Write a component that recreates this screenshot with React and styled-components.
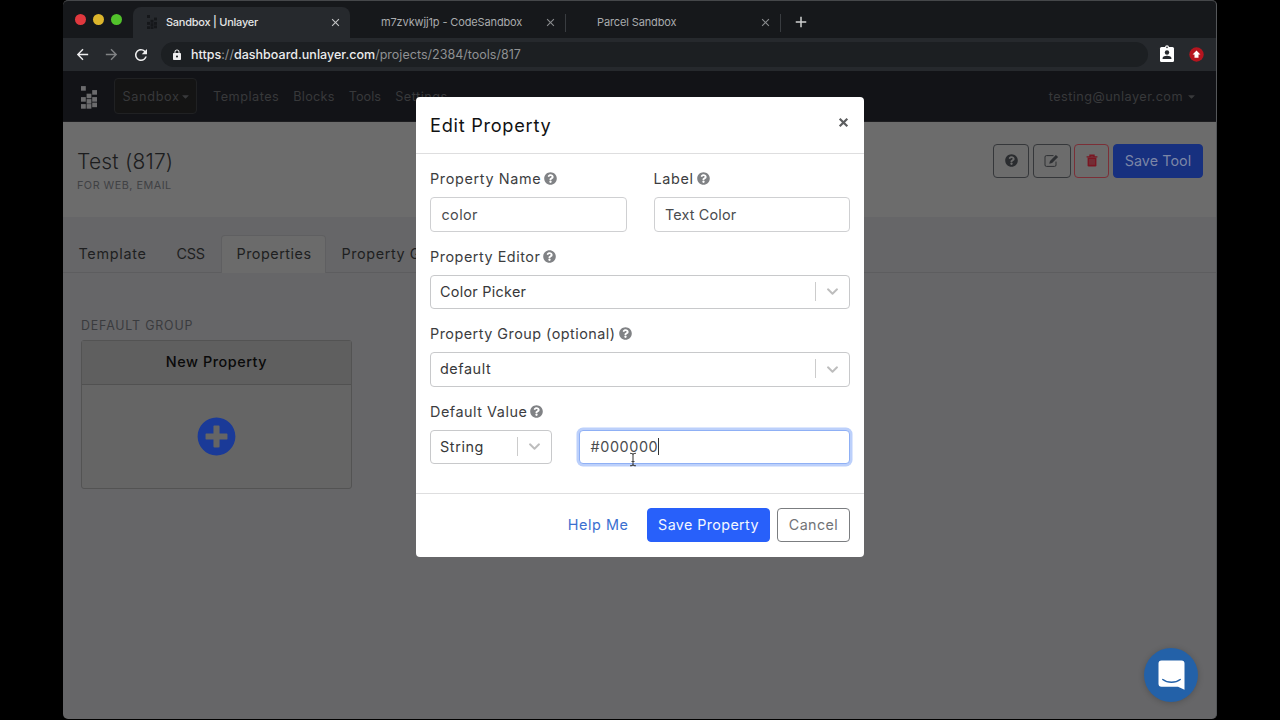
import React from "react";
import styled, { createGlobalStyle } from "styled-components";
import { FaQuestionCircle, FaPlusCircle, FaCaretDown } from "react-icons/fa";
import {
  MdArrowBack,
  MdArrowForward,
  MdRefresh,
  MdLock,
  MdClose,
  MdAdd,
} from "react-icons/md";

const GlobalStyle = createGlobalStyle`
  * { box-sizing: border-box; }
  body {
    margin: 0;
    background: #000;
    font-family: Inter, "Open Sans", sans-serif;
    overflow: hidden;
  }
`;

const Screen = styled.div`
  width: 1280px;
  height: 720px;
  padding: 0 63px 1px;
  background: #000;
`;

const Window = styled.div`
  position: relative;
  display: flex;
  flex-direction: column;
  height: 719px;
  overflow: hidden;
  border-top: 1px solid #45474a;
  border-right: 1px solid #55575a;
  border-radius: 5px;
  background: #666668;
`;

const Text = styled.span`
  white-space: nowrap;
  letter-spacing: ${(p) => p.$ls || 0}px;
`;

/* browser chrome */
const TabStrip = styled.div`
  display: flex;
  align-items: flex-end;
  height: 37px;
  flex: none;
  background: #16181b;
`;

const Lights = styled.div`
  display: flex;
  gap: 7px;
  width: 70px;
  height: 37px;
  padding: 13px 0 0 12px;
`;

const Light = styled.i`
  width: 11px;
  height: 11px;
  border-radius: 50%;
  background: ${(p) => p.$color};
`;

const Tab = styled.div`
  display: flex;
  align-items: center;
  gap: 9px;
  width: ${(p) => p.$width}px;
  height: 31px;
  padding: 0 8px 1px ${(p) => p.$pad}px;
  border-radius: 8px 8px 0 0;
  background: ${(p) => (p.$active ? "#26292d" : "none")};
  color: ${(p) => (p.$active ? "#e4e5e6" : "#a9abad")};
  font-size: 11px;
  font-weight: ${(p) => (p.$active ? 500 : 400)};

  svg:last-child {
    margin-left: auto;
    color: ${(p) => (p.$active ? "#c4c5c6" : "#8a8c8e")};
  }
`;

const TabLine = styled.i`
  width: 1px;
  height: 18px;
  margin-bottom: 6px;
  background: #393c40;
`;

const NewTab = styled.div`
  display: flex;
  align-items: center;
  height: 31px;
  padding: 0 0 1px 11px;
  color: #cfd0d1;
`;

const Toolbar = styled.div`
  display: flex;
  align-items: center;
  height: 33px;
  flex: none;
  padding: 0 11px;
  background: #26292d;
  color: #eeeeef;
`;

const NavIcon = styled.span`
  display: flex;
  width: 29px;
  opacity: ${(p) => (p.$dim ? 0.45 : 1)};
`;

const Omnibox = styled.div`
  display: flex;
  align-items: center;
  width: 987px;
  height: 25px;
  padding-left: 10px;
  border-radius: 13px;
  background: #1c1f22;
  font-size: 12.5px;

  svg {
    margin-right: 8px;
  }
`;

const Url = styled(Text)`
  color: #8f9193;

  b {
    font-weight: 500;
    color: #ececed;
  }
`;

const Extensions = styled.div`
  display: flex;
  align-items: center;
  gap: 14px;
  height: 33px;
  margin-left: 11px;
  padding-bottom: 1px;
`;

/* app */
const AppNav = styled.div`
  display: flex;
  align-items: center;
  height: 51px;
  flex: none;
  padding: 0 19px 0 18px;
  background: #121317;
  border-bottom: 1px solid #1d1d20;
  color: #38393b;
  font-size: 12.7px;
`;

const Brand = styled.div`
  display: flex;
  padding-top: 3px;
`;

const ProjectButton = styled.div`
  display: flex;
  align-items: center;
  width: 83px;
  height: 36px;
  margin: 0 16px 0 17px;
  padding-left: 7.5px;
  border: 1px solid #202123;
  border-radius: 4px;
  background: #141414;
`;

const NavLinks = styled.div`
  display: flex;
  gap: 14px;
`;

const Account = styled.div`
  display: flex;
  align-items: center;
  gap: 3px;
  margin-left: auto;
`;

const PageHeader = styled.div`
  display: flex;
  justify-content: space-between;
  height: 95px;
  flex: none;
  padding: 22px 13px 0 14px;
  background: #6c6c6c;
`;

const PageTitle = styled.h1`
  margin: 3px 0 0;
  font-size: 21px;
  line-height: 29px;
  font-weight: 300;
  color: #1c1d1e;
`;

const Subtitle = styled.div`
  margin-top: 2px;
  font-size: 10.8px;
  line-height: 16px;
  color: #404144;
`;

const Actions = styled.div`
  display: flex;
  gap: 3.6px;
`;

const IconButton = styled.button`
  display: flex;
  align-items: center;
  justify-content: center;
  width: ${(p) => p.$width}px;
  height: 34px;
  padding: 0 0 1px;
  border: 1px solid ${(p) => (p.$danger ? "#7b2f37" : "#35373a")};
  border-radius: 4px;
  background: none;
  color: ${(p) => (p.$danger ? "#7a1622" : "#2a2c2f")};
`;

const Button = styled.button`
  display: flex;
  align-items: center;
  justify-content: center;
  width: ${(p) => p.$width}px;
  height: 34px;
  padding: 0 0 2px;
  border: 1px solid ${(p) => p.$border || p.$bg};
  border-radius: 4px;
  background: ${(p) => p.$bg};
  color: ${(p) => p.$color};
  font: 400 14.3px Inter, sans-serif;
`;

const PageTabs = styled.div`
  display: flex;
  align-items: flex-end;
  height: 56px;
  flex: none;
  border-bottom: 1px solid #5d5d5f;
  font-size: 14.4px;
  color: #1e1f21;
`;

const PageTab = styled.div`
  display: flex;
  align-items: center;
  height: 38px;
  width: ${(p) => p.$width}px;
  padding: 0 0 2px 14.5px;
  margin-bottom: -1px;
  border: 1px solid ${(p) => (p.$active ? "#5f5f61" : "transparent")};
  border-bottom: 0;
  border-radius: 4px 4px 0 0;
  background: ${(p) => (p.$active ? "#6b6b6b" : "none")};
`;

const Group = styled.div`
  padding: 44px 0 0 18px;
`;

const GroupTitle = styled.div`
  height: 23px;
  font-size: 12.4px;
  line-height: 17px;
  color: #3a3b3e;
`;

const Card = styled.div`
  width: 271px;
  height: 149px;
  border: 1px solid #535353;
  border-radius: 3px;
  background: #656565;
`;

const CardHead = styled.div`
  height: 44px;
  border-bottom: 1px solid #515151;
  background: #5f5f5f;
  color: #0a0a0a;
  font-size: 14.4px;
  font-weight: 500;
  line-height: 42px;
  text-align: center;
`;

const CardBody = styled.div`
  display: flex;
  align-items: center;
  justify-content: center;
  height: 103px;
  color: #1a3a98;
`;

/* modal */
const Modal = styled.div`
  position: absolute;
  top: 96px;
  left: 353px;
  width: 448px;
  height: 460px;
  border-radius: 4px;
  background: #fff;
  color: #3c3d3f;
  font-size: 14.4px;
`;

const ModalHeader = styled.div`
  display: flex;
  justify-content: space-between;
  height: 57px;
  padding: 15px 15px 0 14px;
  border-bottom: 1px solid #dededf;
  color: #111213;
  font-size: 18.2px;
  line-height: 26px;
`;

const CloseButton = styled.svg`
  margin-top: 5px;
  width: 11px;
  height: 11px;
`;

const ModalBody = styled.div`
  display: flex;
  flex-direction: column;
  height: 339px;
  padding: 13px 14px 0;
`;

const FieldRow = styled.div`
  display: flex;
  justify-content: space-between;
`;

const Field = styled.div`
  width: ${(p) => (p.$width ? p.$width + "px" : "auto")};
  height: 77.5px;
`;

const Label = styled.div`
  display: flex;
  align-items: center;
  gap: 3px;
  height: 23px;
  margin-bottom: 7px;

  svg {
    color: #808285;
  }
`;

const Input = styled.div`
  display: flex;
  align-items: center;
  width: ${(p) => (p.$width ? p.$width + "px" : "auto")};
  height: 34.5px;
  padding: 0 0 0 10.5px;
  border: 1px solid ${(p) => (p.$focus ? "#8fb0f5" : "#cfd0d2")};
  border-radius: 4px;
  background: #fff;
  box-shadow: ${(p) => (p.$focus ? "0 0 0 2.5px #bcd0fb" : "none")};
  color: #4a4c4f;
`;

const Caret = styled.i`
  width: 1px;
  height: 17px;
  background: #333;
`;

const Select = styled(Input)`
  padding: 0 0 1px 9px;
  border-color: #c8c9cb;
  color: #37383a;

  svg {
    margin: 1px 10px 0 10px;
  }
`;

const SelectLine = styled.i`
  width: 1px;
  height: 19px;
  margin-left: auto;
  background: #cccccc;
`;

const ModalFooter = styled.div`
  display: flex;
  align-items: flex-start;
  justify-content: flex-end;
  height: 64px;
  padding: 14px 14px 0;
  border-top: 1px solid #dededf;
`;

const HelpLink = styled(Text)`
  margin-right: 18.5px;
  line-height: 33px;
  color: #3a6fd0;
`;

const Gap = styled.i`
  width: 7px;
`;

const Chat = styled.div`
  position: absolute;
  right: 18px;
  bottom: 17px;
  display: flex;
  align-items: center;
  justify-content: center;
  width: 54px;
  height: 54px;
  border-radius: 50%;
  background: #2361a8;
  box-shadow: 0 1px 6px rgba(0, 0, 0, 0.2);
`;

const Pointer = styled.svg`
  position: absolute;
  left: 565px;
  top: 451px;
`;

const Logo = ({ size, color }) => (
  <svg width={size} height={size * 1.45} viewBox="0 0 16 23" fill={color}>
    {[
      [0, 0], [0, 11], [0, 18],
      [5.6, 7.6], [5.6, 13], [5.6, 18],
      [11.2, 4], [11.2, 11], [11.2, 16.5],
    ].map(([x, y]) => (
      <rect key={x + "-" + y} x={x} y={y} width="4.8" height="4.6" />
    ))}
  </svg>
);

const Chevron = () => (
  <svg width="13" height="13" viewBox="0 0 13 13" fill="none" stroke="#bdbdbd" strokeWidth="1.9">
    <path d="M2 4.3 6.5 8.7 11 4.3" strokeLinecap="round" strokeLinejoin="round" />
  </svg>
);

const FieldLabel = ({ ls, children }) => (
  <Label>
    <Text $ls={ls}>{children}</Text>
    <FaQuestionCircle size={13} />
  </Label>
);

const SelectBox = ({ width, ls, children }) => (
  <Select $width={width}>
    <Text $ls={ls}>{children}</Text>
    <SelectLine />
    <Chevron />
  </Select>
);

const App = () => {
  return (
    <Screen>
      <GlobalStyle />
      <Window>
        <TabStrip>
          <Lights>
            <Light $color="#e0383e" />
            <Light $color="#dcb52c" />
            <Light $color="#52c22b" />
          </Lights>
          <Tab $active $width={217} $pad={14}>
            <Logo size={10} color="#15171a" />
            <Text $ls={-0.25}>Sandbox | Unlayer</Text>
            <MdClose size={13} />
          </Tab>
          <Tab $width={215} $pad={31}>
            <Text $ls={-0.13}>m7zvkwjj1p - CodeSandbox</Text>
            <MdClose size={13} />
          </Tab>
          <TabLine />
          <Tab $width={214} $pad={31}>
            <Text $ls={-0.13}>Parcel Sandbox</Text>
            <MdClose size={13} />
          </Tab>
          <TabLine />
          <NewTab>
            <MdAdd size={18} />
          </NewTab>
        </TabStrip>
        <Toolbar>
          <NavIcon><MdArrowBack size={17} /></NavIcon>
          <NavIcon $dim><MdArrowForward size={17} /></NavIcon>
          <NavIcon><MdRefresh size={18} /></NavIcon>
          <Omnibox>
            <MdLock size={12} />
            <Url $ls={0.02}>
              <b>https</b>://<b>dashboard.unlayer.com</b>/projects/2384/tools/817
            </Url>
          </Omnibox>
          <Extensions>
            <svg width="16" height="18" viewBox="0 0 16 18">
              <rect x="1" y="2" width="14" height="15" rx="1.5" fill="#fff" />
              <circle cx="8" cy="2.2" r="2" fill="#fff" />
              <circle cx="8" cy="2.4" r="0.8" fill="#26292d" />
              <circle cx="8" cy="7.5" r="2.2" fill="#26292d" />
              <path d="M3.6 14v-1c0-1.6 3-2.3 4.4-2.3s4.4.7 4.4 2.3v1z" fill="#26292d" />
            </svg>
            <svg width="15" height="15" viewBox="0 0 15 15">
              <circle cx="7.5" cy="7.5" r="7.2" fill="#b5151f" />
              <path d="M7.5 3.4 11.4 7.6H9.5V10.8H5.5V7.6H3.6z" fill="#fff" />
            </svg>
          </Extensions>
        </Toolbar>
        <AppNav>
          <Brand>
            <Logo size={16} color="#6b6b6d" />
          </Brand>
          <ProjectButton>
            <Text $ls={0.65}>Sandbox</Text>
            <FaCaretDown size={11} />
          </ProjectButton>
          <NavLinks>
            <Text $ls={0.5}>Templates</Text>
            <Text $ls={0.25}>Blocks</Text>
            <Text $ls={0.05}>Tools</Text>
            <Text $ls={0.5}>Settings</Text>
          </NavLinks>
          <Account>
            <Text $ls={0.45}>testing@unlayer.com</Text>
            <FaCaretDown size={11} />
          </Account>
        </AppNav>
        <PageHeader>
          <div>
            <PageTitle><Text $ls={0.2}>Test (817)</Text></PageTitle>
            <Subtitle><Text $ls={0.5}>FOR WEB, EMAIL</Text></Subtitle>
          </div>
          <Actions>
            <IconButton $width={36}><FaQuestionCircle size={13} /></IconButton>
            <IconButton $width={38}>
              <svg width="15" height="14" viewBox="0 0 15 14" fill="none" stroke="#2e3033">
                <path d="M9.5 1.6H2.4a1.4 1.4 0 0 0-1.4 1.4v8a1.4 1.4 0 0 0 1.4 1.4h8.2A1.4 1.4 0 0 0 12 11V7.6" />
                <path d="M5.2 9.8l.8-2.9L11.9 1l2.2 2.1-6 5.9z" fill="#2e3033" stroke="none" />
              </svg>
            </IconButton>
            <IconButton $width={35} $danger>
              <svg width="12" height="13" viewBox="0 0 12 13" fill="none" stroke="#7a1622">
                <path d="M.6 2.9h10.8M4 2.6V1.2h4v1.4" strokeWidth="1.4" />
                <path d="M1.6 3.5h8.8V11.3a1.2 1.2 0 0 1-1.2 1.2H2.8a1.2 1.2 0 0 1-1.2-1.2z" fill="#7a1622" stroke="none" />
                <path d="M4 5v5.8M6 5v5.8M8 5v5.8" stroke="#6c5254" strokeWidth=".8" />
              </svg>
            </IconButton>
            <Button $width={90} $bg="#17307f" $color="#7c86a6">
              <Text $ls={0.1}>Save Tool</Text>
            </Button>
          </Actions>
        </PageHeader>
        <PageTabs>
          <PageTab $width={98}><Text $ls={0.7}>Template</Text></PageTab>
          <PageTab $width={60}><Text $ls={-0.2}>CSS</Text></PageTab>
          <PageTab $width={105} $active><Text $ls={0.5}>Properties</Text></PageTab>
          <PageTab $width={90}><Text $ls={0.6}>Property G</Text></PageTab>
        </PageTabs>
        <Group>
          <GroupTitle><Text $ls={0.85}>DEFAULT GROUP</Text></GroupTitle>
          <Card>
            <CardHead><Text $ls={0.55}>New Property</Text></CardHead>
            <CardBody><FaPlusCircle size={39} /></CardBody>
          </Card>
        </Group>

        <Modal>
          <ModalHeader>
            <Text $ls={0.72}>Edit Property</Text>
            <CloseButton viewBox="0 0 11 11" stroke="#5c5d5f" strokeWidth="2.2">
              <path d="M1.7 1.7l7.6 7.6M9.3 1.7L1.7 9.3" />
            </CloseButton>
          </ModalHeader>
          <ModalBody>
            <FieldRow>
              <Field $width={196.5}>
                <FieldLabel ls={0.65}>Property Name</FieldLabel>
                <Input><Text $ls={0.4}>color</Text></Input>
              </Field>
              <Field $width={196.5}>
                <FieldLabel ls={0.65}>Label</FieldLabel>
                <Input><Text $ls={0.15}>Text Color</Text></Input>
              </Field>
            </FieldRow>
            <Field>
              <FieldLabel ls={0.52}>Property Editor</FieldLabel>
              <SelectBox ls={0.27}>Color Picker</SelectBox>
            </Field>
            <Field>
              <FieldLabel ls={0.48}>Property Group (optional)</FieldLabel>
              <SelectBox ls={0.55}>default</SelectBox>
            </Field>
            <Field>
              <FieldLabel ls={0.52}>Default Value</FieldLabel>
              <FieldRow>
                <SelectBox width={122} ls={0.6}>String</SelectBox>
                <Input $width={271} $focus>
                  <Text $ls={0.6}>#000000</Text>
                  <Caret />
                </Input>
              </FieldRow>
            </Field>
          </ModalBody>
          <ModalFooter>
            <HelpLink $ls={0.55}>Help Me</HelpLink>
            <Button $width={123} $bg="#2860fa" $color="#f4f7ff">
              <Text $ls={0.4}>Save Property</Text>
            </Button>
            <Gap />
            <Button $width={73} $bg="#fff" $border="#7b7d80" $color="#717376">
              <Text $ls={0.4}>Cancel</Text>
            </Button>
          </ModalFooter>
        </Modal>

        <Pointer width="10" height="15" viewBox="0 0 10 15" fill="none" stroke="#444" strokeWidth="1.1">
          <path d="M2 1.2c2 0 3 .6 3 1.6v9.4c0 1-1 1.6-3 1.6M8 1.2c-2 0-3 .6-3 1.6v9.4c0 1 1 1.6 3 1.6M3.5 9.5h3" />
        </Pointer>

        <Chat>
          <svg width="27" height="30" viewBox="0 0 27 30">
            <path d="M3.5.5h20a3 3 0 0 1 3 3V29.7l-6.5-3H3.5a3 3 0 0 1-3-3V3.5a3 3 0 0 1 3-3z" fill="#fff" />
            <path d="M4.8 19.5c4.8 3.8 12.6 3.8 17.4 0" fill="none" stroke="#2361a8" strokeWidth="1.5" strokeLinecap="round" />
          </svg>
        </Chat>
      </Window>
    </Screen>
  );
};

export default App;
